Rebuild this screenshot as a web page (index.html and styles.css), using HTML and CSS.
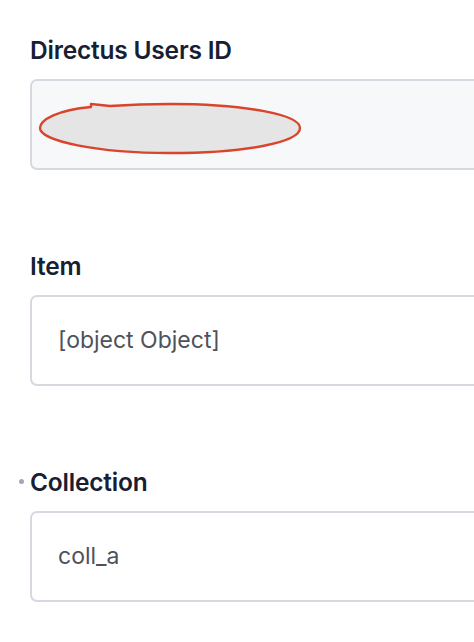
FILE: index.html
```html
<!DOCTYPE html>
<html>
<head>
<meta charset="utf-8">
<link rel="stylesheet" href="styles.css">
</head>
<body>
<div class="form">
  <div class="field">
    <div class="label">Directus Users ID</div>
    <div class="input disabled">
      <svg class="redact" width="266" height="58" viewBox="0 0 266 58">
        <path d="M54 8 C 20 11, 3 21, 3 29 C 3 42, 60 54, 133 54 C 210 54, 263 43, 263 29 C 263 16, 210 5, 133 5 C 105 5, 88 6, 73 7 L 54 5 Z" fill="#e5e5e6" stroke="#d9442b" stroke-width="2.4" stroke-linejoin="round"/>
      </svg>
    </div>
  </div>
  <div class="field">
    <div class="label">Item</div>
    <div class="input"><span class="value">[object Object]</span></div>
  </div>
  <div class="field">
    <div class="label"><span class="dot"></span>Collection</div>
    <div class="input"><span class="value">coll_a</span></div>
  </div>
</div>
</body>
</html>
```
FILE: styles.css
```css
html, body {
  margin: 0;
  padding: 0;
  background: #ffffff;
  overflow: hidden;
}
body {
  font-family: Inter, "Noto Sans", sans-serif;
  width: 474px;
  height: 642px;
  overflow: hidden;
}
.form {
  display: flex;
  flex-direction: column;
  gap: 81.5px;
  padding: 35px 0 0 30px;
  width: 444px;
  overflow: hidden;
}
.field {
  display: flex;
  flex-direction: column;
  gap: 14px;
}
.label {
  position: relative;
  font-size: 24.5px;
  font-weight: 600;
  line-height: 30px;
  color: #172033;
  letter-spacing: -0.2px;
}
.dot {
  position: absolute;
  left: -11px;
  top: 12px;
  width: 5px;
  height: 5px;
  border-radius: 50%;
  background: #a4a8b0;
}
.input {
  box-sizing: border-box;
  width: 460px;
  height: 90.5px;
  border: 2px solid #d6d9e0;
  border-radius: 7px;
  background: #ffffff;
  display: flex;
  align-items: center;
  padding-left: 26px;
}
.input.disabled {
  background: #f7f8fa;
  padding-left: 5px;
}
.redact {
  display: block;
  margin-top: 8px;
}
.value {
  font-size: 23px;
  color: #4d525c;
  font-weight: 400;
}
```
